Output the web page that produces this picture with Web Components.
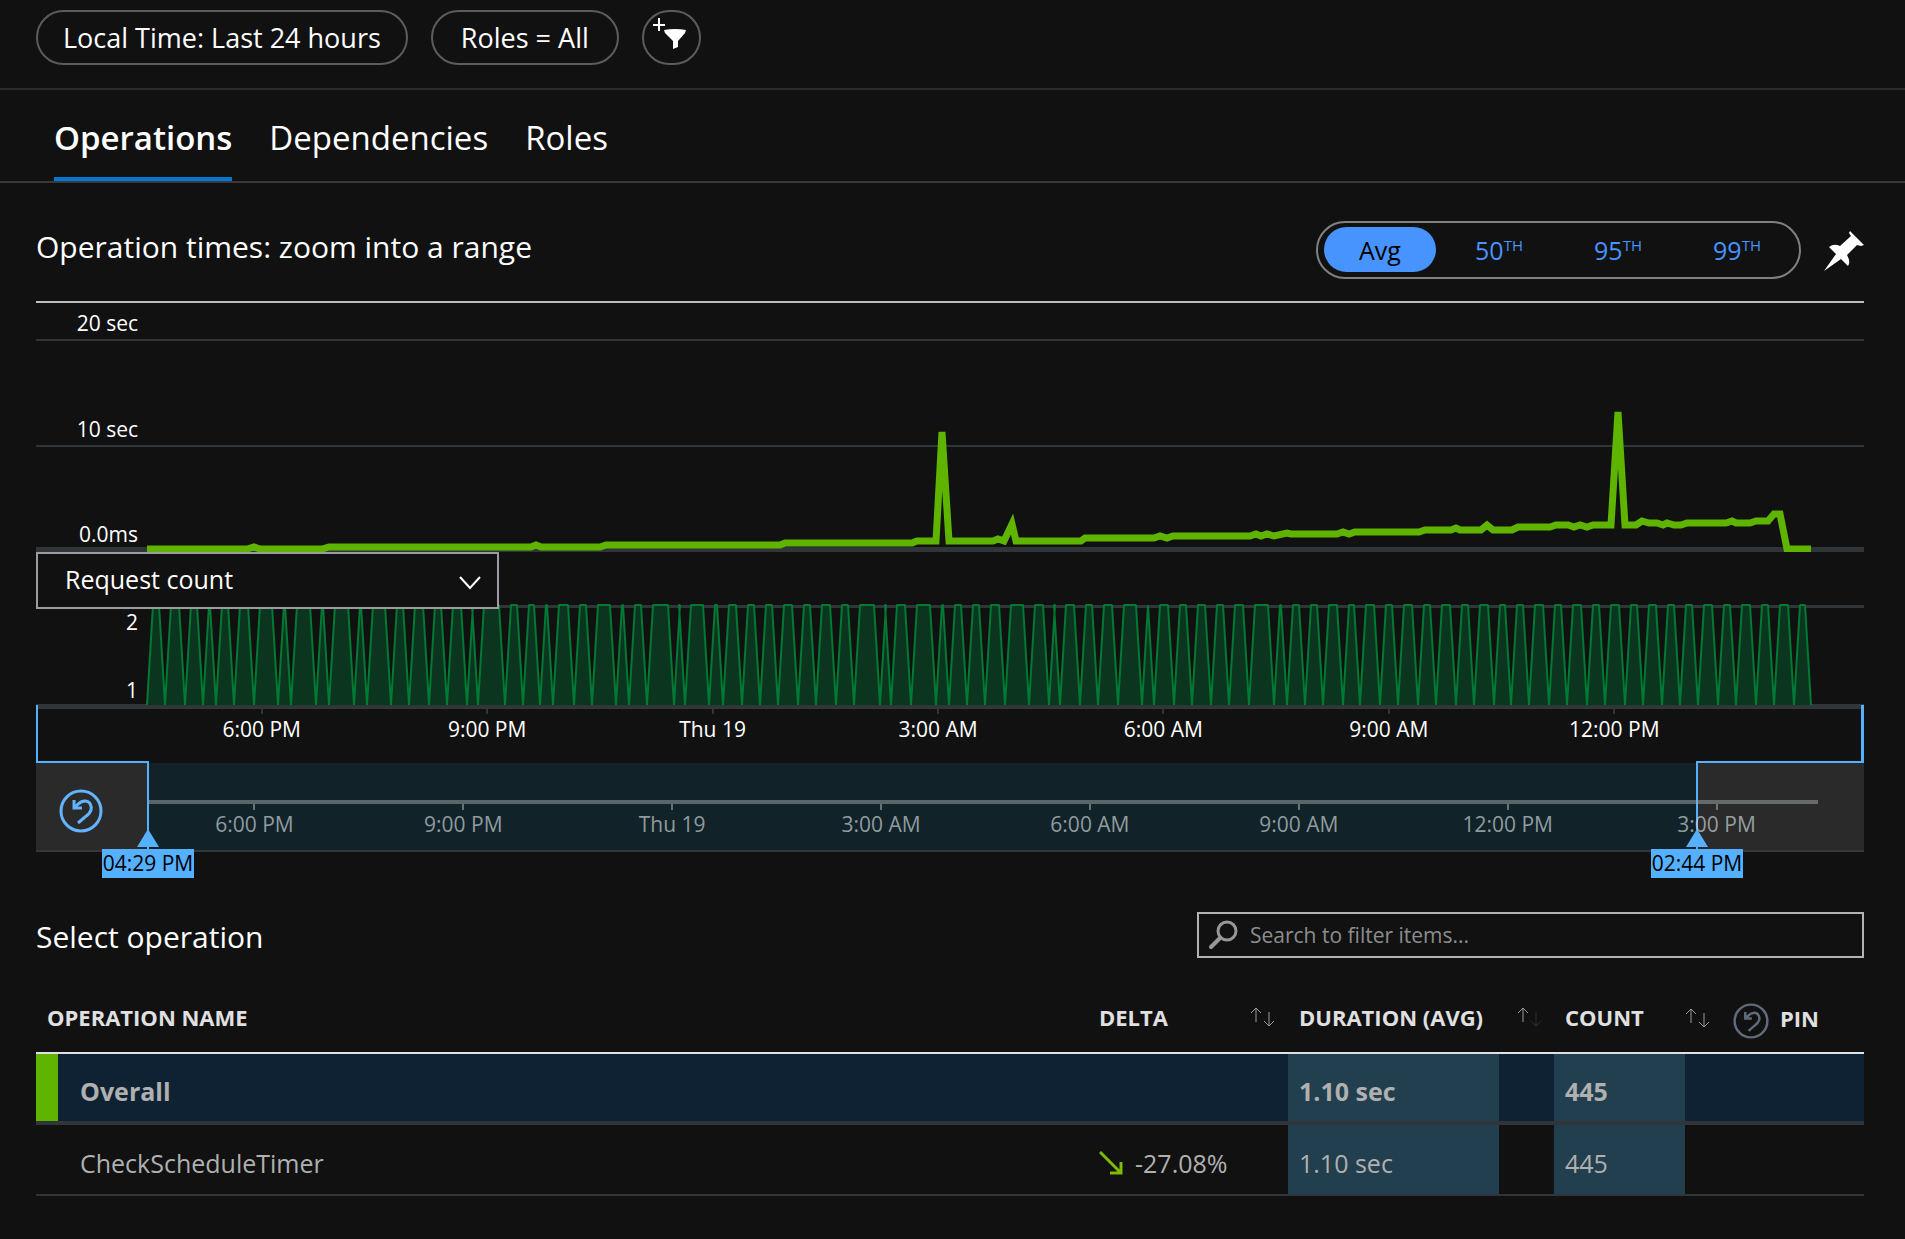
<!DOCTYPE html>
<html lang="en">
<head>
<meta charset="UTF-8">
<meta name="viewport" content="width=device-width, initial-scale=1.0">
<title>Performance</title>
<style>
    body {
        margin: 0;
        background: #111111;
        color: #ffffff;
        font-family: "Open Sans", "Noto Sans", sans-serif;
        font-size: 21px;
    }
    main {
        padding: 0 41px 0 36px;
    }
</style>
</head>
<body>
<filter-bar>
    <filter-pill>Local Time: Last 24 hours</filter-pill>
    <filter-pill>Roles = All</filter-pill>
    <add-filter></add-filter>
</filter-bar>
<tab-bar></tab-bar>
<main>
    <chart-header>Operation times: zoom into a range</chart-header>
    <duration-chart></duration-chart>
    <count-chart></count-chart>
    <time-axis></time-axis>
    <time-brush></time-brush>
    <operation-search>Select operation</operation-search>
    <operation-table></operation-table>
</main>

<script>
// Undo glyph shared by the brush and the table header
const undoIcon = `
    <svg viewBox="0 0 44 44" fill="none" stroke="currentColor">
        <circle cx="22" cy="22" r="20" stroke-width="3"/>
        <path d="M15 11v8h8M15 19l3-3c3-3 5-4 8-4 5 0 7 5 6 9-1 3-3 5-6 7l-7 6" stroke-width="3"/>
    </svg>`;

const sortIcon = `
    <svg width="24" height="20" viewBox="0 0 24 20" fill="none" stroke="#9a9a9a">
        <path d="M6 15V1M1 6l5-5 5 5"/>
        <path class="down" d="M19 5v14M14 14l5 5 5-5"/>
    </svg>`;

class FilterBar extends HTMLElement {
    constructor() {
        super();
        this.attachShadow({ mode: 'open' });
        this.shadowRoot.innerHTML = `
            <style>
                :host {
                    display: flex;
                    gap: 23px;
                    padding: 10px 36px 23px;
                    border-bottom: 2px solid #2b2b2b;
                }
            </style>
            <slot></slot>
        `;
    }
}
customElements.define('filter-bar', FilterBar);

class FilterPill extends HTMLElement {
    constructor() {
        super();
        this.attachShadow({ mode: 'open' });
        this.shadowRoot.innerHTML = `
            <style>
                :host { display: block; }
                button {
                    min-width: 188px;
                    height: 55px;
                    padding: 0 25px 1px;
                    border: 2px solid #5c5c5c;
                    border-radius: 28px;
                    background: none;
                    color: inherit;
                    font: inherit;
                    font-size: 27px;
                }
            </style>
            <button type="button"><slot></slot></button>
        `;
    }
}
customElements.define('filter-pill', FilterPill);

class AddFilter extends HTMLElement {
    constructor() {
        super();
        this.attachShadow({ mode: 'open' });
        this.shadowRoot.innerHTML = `
            <style>
                :host { display: block; }
                button {
                    display: block;
                    width: 59px;
                    height: 55px;
                    padding: 0;
                    border: 2px solid #5c5c5c;
                    border-radius: 28px;
                    background: none;
                }
                svg { display: block; }
            </style>
            <button type="button" aria-label="Add filter">
                <svg width="55" height="51" viewBox="0 0 55 51">
                    <path d="M9 13h12M15 6v13" stroke="#fff" stroke-width="2"/>
                    <path d="M20 18q11-2 22 0l-1 3-7 8v6l-5 2v-8l-8-8z" fill="#fff"/>
                </svg>
            </button>
        `;
    }
}
customElements.define('add-filter', AddFilter);

class TabBar extends HTMLElement {
    constructor() {
        super();
        this.attachShadow({ mode: 'open' });
        this.shadowRoot.innerHTML = `
            <style>
                :host {
                    display: block;
                    border-bottom: 2px solid #3a3a3a;
                }
                nav {
                    display: flex;
                    gap: 37px;
                    padding: 0 54px;
                }
                a {
                    color: #ffffff;
                    font-size: 33px;
                    line-height: 48px;
                    padding: 24px 0 15px;
                    border-bottom: 4px solid transparent;
                    text-decoration: none;
                }
                a.active {
                    font-weight: 600;
                    border-color: #0078d4;
                }
            </style>
            <nav>
                <a href="#operations" class="active">Operations</a>
                <a href="#dependencies">Dependencies</a>
                <a href="#roles">Roles</a>
            </nav>
        `;
    }
}
customElements.define('tab-bar', TabBar);

class ChartHeader extends HTMLElement {
    constructor() {
        super();
        this.attachShadow({ mode: 'open' });
        this.shadowRoot.innerHTML = `
            <style>
                :host {
                    display: flex;
                    align-items: center;
                    padding: 38px 0 22px;
                    border-bottom: 2px solid #bdbdbd;
                }
                h2 {
                    flex: 1;
                    margin: 0;
                    padding-bottom: 6px;
                    font-size: 30px;
                    font-weight: 400;
                    line-height: 40px;
                }
                .group {
                    display: flex;
                    gap: 7px;
                    padding: 4px 6px 5px;
                    border: 2px solid #808080;
                    border-radius: 30px;
                }
                button {
                    width: 112px;
                    height: 45px;
                    padding: 2px 0 0;
                    border: 0;
                    border-radius: 23px;
                    background: none;
                    color: #4894fe;
                    font: inherit;
                    font-size: 25px;
                    line-height: 43px;
                }
                button.active {
                    background: #4894fe;
                    color: #000000;
                }
                sup {
                    font-size: 15px;
                    line-height: 0;
                }
                .pin {
                    width: 40px;
                    margin-left: 23px;
                    padding: 0;
                }
                svg { display: block; }
            </style>
            <h2><slot></slot></h2>
            <div class="group">
                <button type="button" class="active">Avg</button>
                <button type="button">50<sup>TH</sup></button>
                <button type="button">95<sup>TH</sup></button>
                <button type="button">99<sup>TH</sup></button>
            </div>
            <button type="button" class="pin" aria-label="Pin to dashboard">
                <svg width="40" height="45" viewBox="0 0 40 45">
                    <path d="M26 3l14 14-3 1-4-1-10 10q4 7 1 11l-7-7L0 43l12-17-7-7q5-4 11-1L27 8l-2-3z" fill="#fff"/>
                </svg>
            </button>
        `;
    }
}
customElements.define('chart-header', ChartHeader);

class DurationChart extends HTMLElement {
    constructor() {
        super();
        this.attachShadow({ mode: 'open' });
        const points = `147,549 247,549 254,547 260,549 322,549 329,547 531,547 536,545 541,547 600,547 606,545
            780,545 785,543 912,543 917,541 936,541 942,432 949,541 993,541 998,539 1004,541 1012,524 1016,541
            1081,541 1085,538 1154,538 1160,536 1167,538 1173,536 1250,536 1256,534 1261,536 1267,534 1274,536
            1287,533 1291,534 1337,534 1343,532 1349,534 1355,532 1419,532 1425,530 1451,530 1456,528 1460,530
            1481,530 1487,525 1493,530 1512,530 1518,527 1550,527 1556,525 1568,525 1574,527 1580,525 1587,527
            1593,525 1611,525 1618,412 1625,525 1636,525 1642,521 1649,523 1657,523 1663,525 1667,523 1674,525
            1681,525 1687,523 1726,523 1732,521 1736,523 1750,523 1756,521 1768,521 1774,514 1780,514 1787,549 1811,549`;
        this.shadowRoot.innerHTML = `
            <style>
                :host { display: grid; }
                .rows, svg { grid-area: 1 / 1; }
                .row {
                    display: flex;
                    align-items: flex-end;
                    box-sizing: border-box;
                    height: 106px;
                    border-bottom: 2px solid #30353a;
                }
                .row:first-child { height: 38px; }
                .row:last-child {
                    height: 105px;
                    border-bottom-width: 5px;
                }
                span {
                    width: 102px;
                    text-align: right;
                    line-height: 32px;
                }
                .row:last-child span { line-height: 26px; }
                svg { width: 100%; height: 249px; }
            </style>
            <div class="rows">
                <div class="row"><span>20 sec</span></div>
                <div class="row"><span>10 sec</span></div>
                <div class="row"><span>0.0ms</span></div>
            </div>
            <svg viewBox="36 303 1828 249" preserveAspectRatio="none">
                <polyline points="${points}" fill="none" stroke="#5eb400" stroke-width="7" stroke-miterlimit="5"/>
            </svg>
        `;
    }
}
customElements.define('duration-chart', DurationChart);

class CountChart extends HTMLElement {
    constructor() {
        super();
        this.attachShadow({ mode: 'open' });
        this.shadowRoot.innerHTML = `
            <style>
                :host {
                    display: grid;
                    position: relative;
                    height: 152px;
                    border-bottom: 5px solid #30353a;
                }
                .scale, svg { grid-area: 1 / 1; }
                .scale {
                    display: flex;
                    flex-direction: column;
                    justify-content: space-between;
                    height: 96px;
                    margin-top: 53px;
                    border-top: 3px solid #30353a;
                }
                .scale span {
                    width: 102px;
                    text-align: right;
                    line-height: 28px;
                }
                svg { width: 100%; height: 153px; }
                .picker {
                    position: absolute;
                    left: 0;
                    top: 0;
                    display: grid;
                    width: 463px;
                }
                select {
                    grid-area: 1 / 1;
                    appearance: none;
                    height: 57px;
                    padding: 0 27px 4px;
                    border: 2px solid #9b9ba0;
                    border-radius: 0;
                    background: #111111;
                    color: #ffffff;
                    font: inherit;
                    font-size: 25px;
                }
                .picker svg {
                    width: 22px;
                    height: 14px;
                    place-self: center end;
                    margin: 4px 18px 0 0;
                    pointer-events: none;
                }
            </style>
            <div class="scale"><span>2</span><span>1</span></div>
            <svg viewBox="36 552 1828 153" preserveAspectRatio="none">
                <path d="${this.buildPath()}" fill="#0c351f" stroke="#007a33" stroke-width="2" stroke-linejoin="bevel"/>
            </svg>
            <div class="picker">
                <select aria-label="Metric"><option>Request count</option></select>
                <svg viewBox="0 0 22 14" fill="none" stroke="#fff" stroke-width="2">
                    <path d="M1 1l10 11L21 1"/>
                </svg>
            </div>
        `;
    }

    // The count alternates between 1 and 2, so the samples at 1 describe the whole series
    buildPath() {
        const lows = [
            147, 165, 185, 203, 216, 234, 254, 278, 291, 316, 329, 354, 367, 391, 409, 429, 447, 467, 478, 505,
            523, 540, 553, 574, 592, 616, 629, 647, 674, 685, 709, 723, 742, 760, 778, 798, 816, 836, 854, 880,
            891, 911, 936, 949, 967, 985, 1005, 1029, 1049, 1060, 1080, 1098, 1118, 1142, 1154, 1174, 1192, 1211,
            1229, 1249, 1274, 1287, 1305, 1323, 1343, 1360, 1380, 1398, 1418, 1436, 1456, 1474, 1494, 1511, 1529,
            1549, 1567, 1587, 1605, 1625, 1643, 1662, 1680, 1698, 1718, 1736, 1756, 1774, 1794, 1811
        ];
        let path = `M${lows[0]} 705`;
        for (let i = 1; i < lows.length; i++) {
            path += `L${lows[i - 1] + 6} 605L${lows[i] - 6} 605L${lows[i]} 705`;
        }
        return path;
    }
}
customElements.define('count-chart', CountChart);

class TimeAxis extends HTMLElement {
    constructor() {
        super();
        this.attachShadow({ mode: 'open' });
        const times = ['6:00 PM', '9:00 PM', 'Thu 19', '3:00 AM', '6:00 AM', '9:00 AM', '12:00 PM'];
        this.shadowRoot.innerHTML = `
            <style>
                /* The side borders start on the chart's base line */
                :host {
                    display: grid;
                    position: relative;
                    grid-template-columns: 111px repeat(${times.length}, 1fr) 134px;
                    box-sizing: border-box;
                    height: 56px;
                    margin-top: -4px;
                    padding-top: 4px;
                    border: solid #55b1ff;
                    border-width: 0 3px 0 2px;
                }
                span {
                    text-align: center;
                    line-height: 30px;
                }
                span:first-of-type { grid-column-start: 2; }
                span::before {
                    content: "";
                    display: block;
                    width: 2px;
                    height: 5px;
                    margin: 0 auto;
                    background: #30353a;
                }
            </style>
            ${times.map(time => `<span>${time}</span>`).join('')}
        `;
    }
}
customElements.define('time-axis', TimeAxis);

class TimeBrush extends HTMLElement {
    constructor() {
        super();
        this.attachShadow({ mode: 'open' });
        const times = ['6:00 PM', '9:00 PM', 'Thu 19', '3:00 AM', '6:00 AM', '9:00 AM', '12:00 PM', '3:00 PM'];
        this.shadowRoot.innerHTML = `
            <style>
                :host {
                    display: grid;
                    grid-template-columns: 113px 1fr 168px;
                    grid-template-rows: 89px;
                    border-bottom: 2px solid #33363a;
                }
                .left, .right {
                    position: relative;
                    background: #2a2a2a;
                    border-top: 2px solid #55b1ff;
                }
                .left { grid-area: 1 / 1; border-right: 2px solid #55b1ff; }
                .right { grid-area: 1 / 3; border-left: 2px solid #55b1ff; }
                .window {
                    grid-area: 1 / 2;
                    background: #112329;
                    border-top: 2px solid #111111;
                }
                .track, .axis {
                    grid-area: 1 / 1 / 2 / 4;
                    z-index: 1;
                    align-self: start;
                }
                .track {
                    height: 4px;
                    margin: 39px 46px 0 113px;
                    background: rgba(160, 170, 170, 0.5);
                }
                .axis {
                    display: grid;
                    grid-template-columns: repeat(${times.length}, 1fr);
                    margin: 43px 43px 0 114px;
                }
                .axis span {
                    color: rgba(200, 210, 212, 0.7);
                    text-align: center;
                    line-height: 28px;
                }
                .axis span::before {
                    content: "";
                    display: block;
                    width: 2px;
                    height: 6px;
                    margin: 0 auto;
                    background: rgba(160, 170, 170, 0.6);
                }
                button {
                    width: 44px;
                    height: 44px;
                    margin: 26px 23px;
                    padding: 0;
                    border: 0;
                    background: none;
                    color: #61b4fd;
                }
                /* Handles hang over the bottom edge of the brush */
                .handle {
                    position: absolute;
                    z-index: 2;
                    top: 66px;
                    width: 92px;
                    color: #000000;
                }
                .left .handle { right: -47px; }
                .right .handle { left: -47px; }
                .handle svg { display: block; margin: 0 auto 2px; }
                .handle div {
                    background: #55b1ff;
                    line-height: 29px;
                    text-align: center;
                    white-space: nowrap;
                }
            </style>
            <div class="left">
                <button type="button" aria-label="Reset range">${undoIcon}</button>
                <div class="handle">
                    <svg width="22" height="18" viewBox="0 0 22 18"><path d="M11 0l11 18H0z" fill="#55b1ff"/></svg>
                    <div>04:29 PM</div>
                </div>
            </div>
            <div class="window"></div>
            <div class="right">
                <div class="handle">
                    <svg width="22" height="18" viewBox="0 0 22 18"><path d="M11 0l11 18H0z" fill="#55b1ff"/></svg>
                    <div>02:44 PM</div>
                </div>
            </div>
            <div class="track"></div>
            <div class="axis">${times.map(time => `<span>${time}</span>`).join('')}</div>
        `;
    }
}
customElements.define('time-brush', TimeBrush);

class OperationSearch extends HTMLElement {
    constructor() {
        super();
        this.attachShadow({ mode: 'open' });
        this.shadowRoot.innerHTML = `
            <style>
                :host {
                    display: flex;
                    align-items: center;
                    justify-content: space-between;
                    padding: 60px 0 26px;
                }
                h2 {
                    margin: 0;
                    padding-top: 4px;
                    font-size: 30px;
                    font-weight: 400;
                    line-height: 40px;
                }
                label {
                    display: flex;
                    align-items: center;
                    gap: 11px;
                    box-sizing: border-box;
                    width: 667px;
                    height: 46px;
                    padding: 0 10px;
                    border: 2px solid #b3b3b3;
                }
                input {
                    flex: 1;
                    padding: 0;
                    border: 0;
                    outline: 0;
                    background: none;
                    color: #ffffff;
                    font: inherit;
                }
                input::placeholder { color: #8d8d8d; }
            </style>
            <h2><slot></slot></h2>
            <label>
                <svg width="30" height="30" viewBox="0 0 30 30" fill="none" stroke="#97979a" stroke-linecap="round">
                    <circle cx="18" cy="11" r="9" stroke-width="3"/>
                    <path d="M11 18L2 27" stroke-width="4"/>
                </svg>
                <input type="text" placeholder="Search to filter items..." aria-label="Search to filter items">
            </label>
        `;
    }
}
customElements.define('operation-search', OperationSearch);

class OperationTable extends HTMLElement {
    constructor() {
        super();
        this.attachShadow({ mode: 'open' });
        this.shadowRoot.innerHTML = `
            <style>
                :host { display: block; }
                table {
                    width: 100%;
                    table-layout: fixed;
                    border-collapse: separate;
                    border-spacing: 0;
                }
                th, td {
                    box-sizing: border-box;
                    text-align: left;
                    white-space: nowrap;
                }
                th {
                    height: 70px;
                    padding: 0 0 2px 11px;
                    border-bottom: 2px solid #e0e0e0;
                    color: #e0e0e0;
                    font-size: 22px;
                }
                td {
                    height: 71px;
                    padding: 6px 0 0 11px;
                    border-bottom: 2px solid #30353a;
                    color: #b0b0b0;
                    font-size: 25px;
                }
                td:first-child { padding-left: 44px; }
                .overall td {
                    background: #0f2233;
                    border-bottom-width: 4px;
                    font-weight: 700;
                }
                .overall td:first-child {
                    background: linear-gradient(to right, #5eb400 22px, #0f2233 22px);
                }
                tr td.fill { background: #213f4e; }
                .cell {
                    display: flex;
                    align-items: center;
                    gap: 12px;
                }
                .sorted { padding-left: 18px; }
                .sorted .down { opacity: 0.2; }
                th:last-child { padding: 0; }
                .undo {
                    width: 36px;
                    height: 36px;
                    margin: 6px -1px 0 12px;
                    color: #5d6b7b;
                }
                svg { display: block; }
            </style>
            <table>
                <colgroup>
                    <col>
                    <col style="width: 151px">
                    <col style="width: 49px">
                    <col style="width: 211px">
                    <col style="width: 55px">
                    <col style="width: 131px">
                    <col style="width: 179px">
                </colgroup>
                <thead>
                    <tr>
                        <th>OPERATION NAME</th>
                        <th>DELTA</th>
                        <th>${sortIcon}</th>
                        <th>DURATION (AVG)</th>
                        <th class="sorted">${sortIcon}</th>
                        <th>COUNT</th>
                        <th>
                            <div class="cell">${sortIcon}<div class="undo">${undoIcon}</div>PIN</div>
                        </th>
                    </tr>
                </thead>
                <tbody>
                    <tr class="overall">
                        <td>Overall</td>
                        <td></td>
                        <td></td>
                        <td class="fill">1.10 sec</td>
                        <td></td>
                        <td class="fill">445</td>
                        <td></td>
                    </tr>
                    <tr>
                        <td>CheckScheduleTimer</td>
                        <td>
                            <div class="cell">
                                <svg width="24" height="24" viewBox="0 0 24 24" fill="none" stroke="#7fba00" stroke-width="3">
                                    <path d="M1 1l20 20M22 11v11H11"/>
                                </svg>
                                -27.08%
                            </div>
                        </td>
                        <td></td>
                        <td class="fill">1.10 sec</td>
                        <td></td>
                        <td class="fill">445</td>
                        <td></td>
                    </tr>
                </tbody>
            </table>
        `;
    }
}
customElements.define('operation-table', OperationTable);
</script>
</body>
</html>
